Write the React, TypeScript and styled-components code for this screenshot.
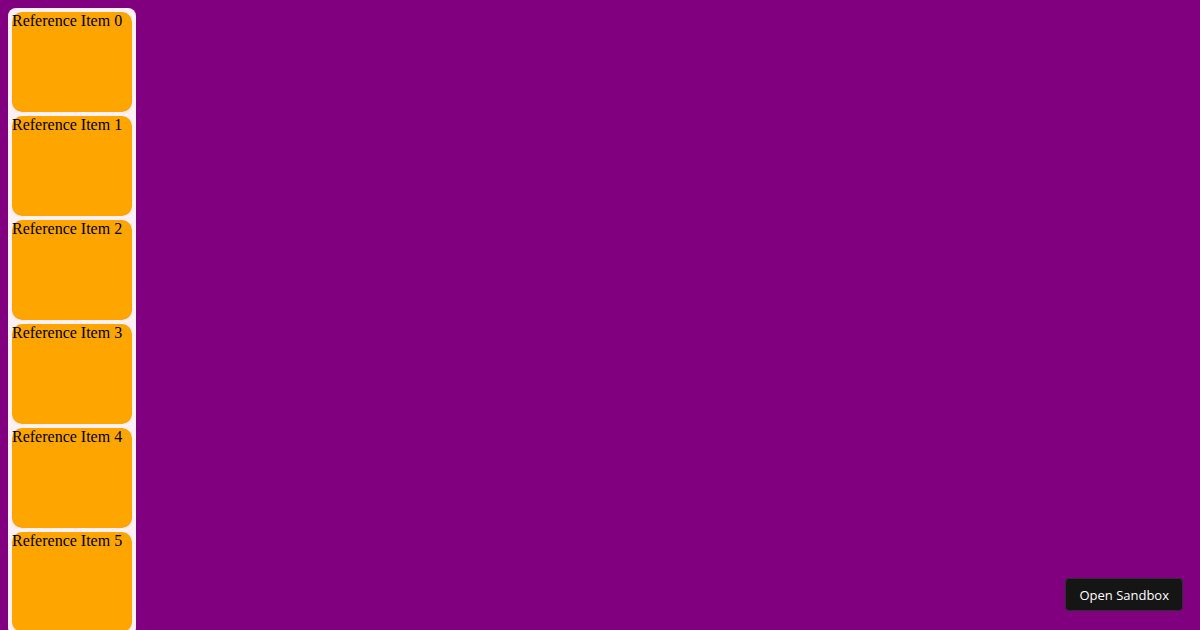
import React from "react";
import styled, { createGlobalStyle } from "styled-components";

const GlobalStyle = createGlobalStyle`
  html, body {
    background: #800080;
  }
  body {
    margin: 8px;
    font-family: "Liberation Serif", "Times New Roman", serif;
    font-size: 16px;
    color: #000;
  }
`;

const List = styled.div`
  width: 120px;
  padding: 4px;
  background: #fff0f5;
  border-radius: 8px;
  display: flex;
  flex-direction: column;
  gap: 4px;
`;

const Item = styled.div`
  height: 100px;
  background: #ffa500;
  border-radius: 10px;
  line-height: 18px;
`;

const SandboxButton = styled.button`
  position: fixed;
  right: 17px;
  bottom: 19px;
  height: 33px;
  padding: 0 13px;
  background: #151515;
  color: #fff;
  border: 1px solid #2e2e2e;
  border-radius: 4px;
  font-family: "Open Sans", "Noto Sans", sans-serif;
  font-size: 13px;
  cursor: pointer;
`;

export default function App() {
  const items = Array.from({ length: 6 }, (_, i) => i);
  return (
    <>
      <GlobalStyle />
      <List>
        {items.map((i) => (
          <Item key={i}>Reference Item {i}</Item>
        ))}
      </List>
      <SandboxButton>Open Sandbox</SandboxButton>
    </>
  );
}
